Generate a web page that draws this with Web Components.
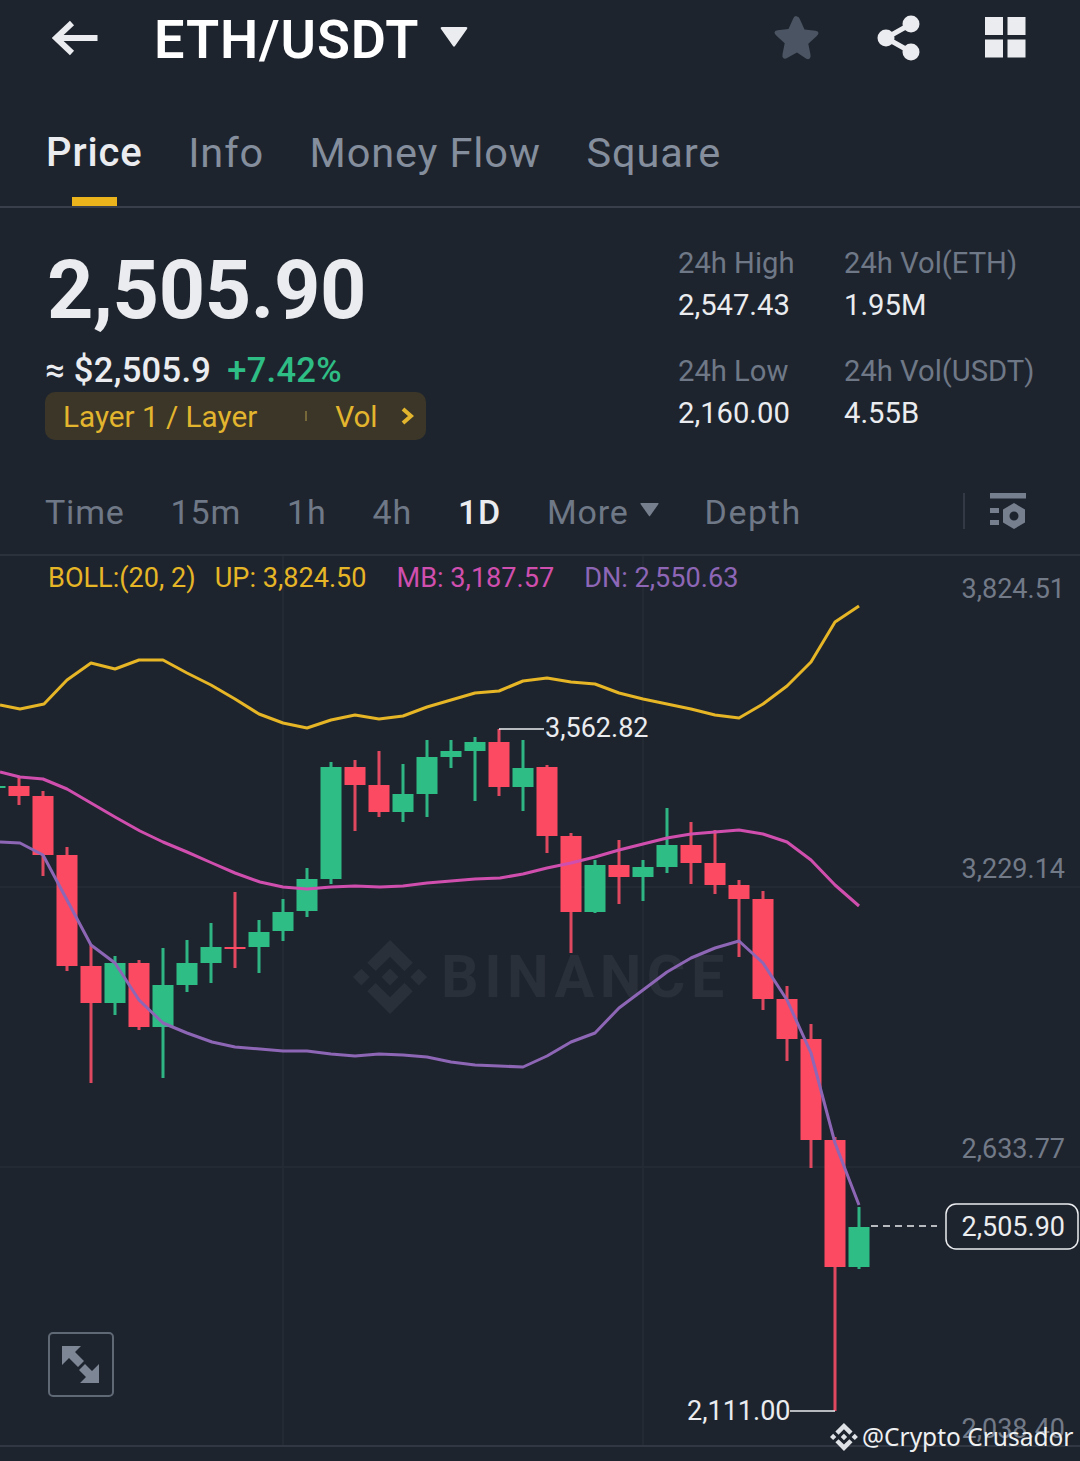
<!DOCTYPE html>
<html lang="en">
<head>
<meta charset="utf-8">
<title>ETH/USDT</title>
<style>
  html, body { margin: 0; background: #1e242e; }
  body { width: 1080px; height: 1461px; overflow: hidden; font-family: Roboto, "Liberation Sans", sans-serif; color: #eaecef; }
</style>
</head>
<body>
<pair-header pair="ETH/USDT"></pair-header>
<tab-bar>
  <tab-item active>Price</tab-item>
  <tab-item>Info</tab-item>
  <tab-item>Money Flow</tab-item>
  <tab-item>Square</tab-item>
</tab-bar>
<price-panel>
  <stat-cell label="24h High">2,547.43</stat-cell>
  <stat-cell label="24h Vol(ETH)">1.95M</stat-cell>
  <stat-cell label="24h Low">2,160.00</stat-cell>
  <stat-cell label="24h Vol(USDT)">4.55B</stat-cell>
</price-panel>
<interval-bar>
  <interval-item>Time</interval-item>
  <interval-item>15m</interval-item>
  <interval-item>1h</interval-item>
  <interval-item>4h</interval-item>
  <interval-item active>1D</interval-item>
  <interval-item caret>More</interval-item>
  <interval-item style="letter-spacing:1.600px">Depth</interval-item>
</interval-bar>
<candle-chart></candle-chart>

<script>
// Top row: back arrow, pair name, star / share / grid
class PairHeader extends HTMLElement {
  constructor() {
    super();
    this.attachShadow({ mode: 'open' });
    const pair = this.getAttribute('pair') || '';
    this.shadowRoot.innerHTML = `
      <style>
        :host { display: flex; align-items: center; height: 76px; padding: 3px 0 0 52px; box-sizing: border-box; }
        .back { margin-top: -4px; }
        .title { margin-left: 55px; font-size: 54px; line-height: 60px; font-weight: 600; color: #fff; letter-spacing: .9px; }
        .caret { margin: -6px 0 0 20px; }
        .icons { margin: -3px 0 0 auto; display: flex; align-items: center; padding-right: 54px; }
        svg { display: block; }
      </style>
      <svg class="back" width="47" height="36" viewBox="0 0 47 36"><path d="M45.500 18H5M20 3 4 18l16 15" fill="none" stroke="#eaecef" stroke-width="6"/></svg>
      <span class="title">${pair}</span>
      <svg class="caret" width="30" height="24" viewBox="0 0 30 24"><path d="M3 2h24q2 0 1 2L16 21q-1 1.500-2 0L2 4q-1-2 1-2z" fill="#eaecef"/></svg>
      <div class="icons">
        <svg width="48" height="48" viewBox="0 0 48 48"><path d="M24 2.500q2 0 3 3l4.500 10 11 1.300q3 .5 3 2.200 0 1.500-2 3.200l-8.200 7.600 2.200 11q.5 3-1 4-1.500 1-4-.5L24 38.500l-9.500 5.300q-2.500 1.500-4 .5-1.500-1-1-4l2.200-11-8.200-7.600q-2-1.700-2-3.200 0-1.700 3-2.200l11-1.300 4.500-10q1-3 3-3z" fill="#4a5462"/></svg>
        <svg style="margin-left:55px" width="46" height="48" viewBox="0 0 46 48"><g fill="#eaecef"><circle cx="10" cy="24" r="8.500"/><circle cx="35" cy="10" r="8.500"/><circle cx="35" cy="38" r="8.500"/></g><path d="M35 10 10 24l25 14" fill="none" stroke="#eaecef" stroke-width="5"/></svg>
        <svg style="margin-left:63px" width="41" height="42" viewBox="0 0 41 42"><g fill="#eaecef"><rect x="0" y="0" width="18" height="18"/><rect x="22.500" y="0" width="18" height="18"/><rect x="0" y="22.500" width="18" height="18"/><rect x="22.500" y="22.500" width="18" height="18"/></g></svg>
      </div>`;
  }
}
customElements.define('pair-header', PairHeader);

class TabBar extends HTMLElement {
  constructor() {
    super();
    this.attachShadow({ mode: 'open' });
    this.shadowRoot.innerHTML = `
      <style>
        :host { display: flex; align-items: flex-end; gap: 45.500px; height: 132px; padding-left: 46px; box-sizing: border-box; border-bottom: 2px solid #39404b; }
      </style>
      <slot></slot>`;
  }
}
customElements.define('tab-bar', TabBar);

class TabItem extends HTMLElement {
  constructor() {
    super();
    this.attachShadow({ mode: 'open' });
    this.shadowRoot.innerHTML = `
      <style>
        :host { display: flex; flex-direction: column; align-items: center; font-size: 41.500px; line-height: 48px; letter-spacing: .9px; color: #848e9c; }
        :host([active]) { color: #eaecef; font-weight: 500; font-size: 40px; }
        .bar { width: 45px; height: 9px; margin-top: 20px; }
        :host([active]) .bar { background: #ecb41c; }
      </style>
      <span><slot></slot></span>
      <div class="bar"></div>`;
  }
}
customElements.define('tab-item', TabItem);

class StatCell extends HTMLElement {
  constructor() {
    super();
    this.attachShadow({ mode: 'open' });
    const label = this.getAttribute('label') || '';
    this.shadowRoot.innerHTML = `
      <style>
        :host { display: block; font-size: 29.200px; line-height: 42px; color: #eaecef; white-space: nowrap; }
        .label { color: #6f7886; }
      </style>
      <div class="label">${label}</div>
      <div><slot></slot></div>`;
  }
}
customElements.define('stat-cell', StatCell);

// Big price, converted price, sector pill and the 24h stats on the right
class PricePanel extends HTMLElement {
  constructor() {
    super();
    this.attachShadow({ mode: 'open' });
    this.shadowRoot.innerHTML = `
      <style>
        :host { display: flex; height: 282px; padding: 34px 0 0 47px; box-sizing: border-box; }
        .left { width: 631px; flex: none; }
        .big { font-size: 81px; line-height: 92px; font-weight: 700; color: #eaecef; letter-spacing: -.4px; margin-top: 3px; }
        .sub { display: flex; gap: 16px; height: 44px; margin-top: 11px; align-items: center; font-size: 34.500px; font-weight: 500; letter-spacing: .3px; margin-left: -2px; }
        .up { color: #2ebd85; }
        .pill { display: flex; align-items: center; width: 381px; height: 48px; margin-left: -2px; box-sizing: border-box; padding-left: 18px; border-radius: 10px; background: #3b3628; color: #e3b52e; font-size: 29.700px; }
        .sep { width: 2px; height: 10px; margin-left: 48px; background: #77683a; }
        .vol { margin-left: 28px; }
        .chev { margin-left: 22px; }
        .stats { display: grid; grid-template-columns: 166px auto; row-gap: 24px; align-content: start; }
      </style>
      <div class="left">
        <div class="big">2,505.90</div>
        <div class="sub"><span>≈ $2,505.9</span><span class="up">+7.42%</span></div>
        <div class="pill">
          <span>Layer 1 / Layer</span><span class="sep"></span><span class="vol">Vol</span>
          <svg class="chev" width="14" height="18" viewBox="0 0 14 18"><path d="M3 2l8 7-8 7" fill="none" stroke="#e3b52e" stroke-width="4"/></svg>
        </div>
      </div>
      <div class="stats"><slot></slot></div>`;
  }
}
customElements.define('price-panel', PricePanel);

class IntervalBar extends HTMLElement {
  constructor() {
    super();
    this.attachShadow({ mode: 'open' });
    this.shadowRoot.innerHTML = `
      <style>
        :host { display: flex; align-items: center; gap: 46px; height: 66px; padding: 0 0 20px 45px; box-sizing: border-box; border-bottom: 2px solid #2c323c; }
        .tools { margin: -3px 0 0 auto; display: flex; align-items: center; padding-right: 54px; }
        .div { width: 2px; height: 36px; background: #333a45; margin-right: 25px; }
        svg { display: block; }
      </style>
      <slot></slot>
      <div class="tools">
        <div class="div"></div>
        <svg width="36" height="38" viewBox="0 0 36 38"><g fill="#767f8e"><rect x="0" y="1" width="36" height="5.500"/><rect x="0" y="16" width="9" height="5"/><rect x="0" y="28" width="9" height="5"/><path fill-rule="evenodd" d="M24 11l11 6.500v13L24 37l-11-6.500v-13zM24 19.500a4.500 4.500 0 1 0 0 9 4.500 4.500 0 0 0 0-9z"/></g></svg>
      </div>`;
  }
}
customElements.define('interval-bar', IntervalBar);

class IntervalItem extends HTMLElement {
  constructor() {
    super();
    this.attachShadow({ mode: 'open' });
    const caret = this.hasAttribute('caret')
      ? '<svg width="19" height="15" viewBox="0 0 19 15" style="margin:-6px 0 0 11px;display:block"><path d="M1 1h17q1 0 .5 1L10 14q-.5 .7-1 0L.5 2Q0 1 1 1z" fill="#767f8e"/></svg>'
      : '';
    this.shadowRoot.innerHTML = `
      <style>
        :host { display: flex; align-items: center; font-size: 34px; line-height: 44px; letter-spacing: .8px; color: #6f7886; }
        :host([active]) { color: #eaecef; font-weight: 500; }
      </style>
      <span><slot></slot></span>${caret}`;
  }
}
customElements.define('interval-item', IntervalItem);

// x of candle 0 is -5, each next one 24px on. [body-top, body-bottom, wick-top, wick-bottom, up?]
const CANDLES = [
  [786,788,786,788,1],[786,796,776,805,0],[796,855,791,876,0],[855,966,847,971,0],[966,1003,945,1083,0],
  [963,1003,956,1015,1],[963,1027,960,1030,0],[985,1027,948,1078,1],[963,985,940,992,1],[947,963,923,983,1],
  [947,949,892,968,0],[932,947,920,973,1],[912,931,899,941,1],[879,911,868,917,1],[767,879,762,884,1],
  [767,785,760,831,0],[785,812,751,817,0],[794,812,764,822,1],[757,794,740,817,1],[751,757,740,768,1],
  [742,751,737,801,1],[742,787,729,796,0],[768,787,740,811,1],[767,836,765,853,0],[836,912,833,953,0],
  [865,912,860,913,1],[865,877,840,904,0],[867,877,860,901,1],[845,867,808,873,1],[845,863,822,884,0],
  [863,885,830,894,0],[885,899,880,957,0],[899,999,891,1010,0],[999,1039,986,1061,0],[1039,1140,1024,1168,0],
  [1140,1267,1137,1411,0],[1227,1267,1207,1269,1]
];

const BOLL_UP = '0,705 20,709 44,704 67,680 91,663 115,669 139,660 163,660 187,673 211,685 235,699 259,714 283,723 307,728 331,720 355,715 379,719 403,716 427,707 451,700 475,693 499,691 523,681 547,678 571,682 595,684 619,693 643,699 667,704 691,709 715,715 739,718 763,704 787,686 811,662 835,622 859,606';
const BOLL_MB = '0,772 20,777 43,779 67,789 91,803 115,817 140,831 163,842 187,852 212,863 235,873 260,882 283,887 307,889 331,887 355,886 380,887 403,886 427,883 451,881 475,879 500,878 523,874 547,868 571,863 595,857 619,850 643,844 667,838 691,834 715,832 739,830 763,834 787,842 811,860 835,885 859,906';
const BOLL_DN = '0,842 20,843 43,855 67,900 91,945 115,963 139,1000 163,1023 187,1033 212,1042 235,1047 260,1049 283,1051 307,1051 331,1054 355,1056 379,1054 403,1055 427,1057 451,1062 475,1065 499,1066 523,1067 547,1056 571,1042 595,1033 619,1008 643,990 667,972 691,958 715,948 739,941 763,963 787,1000 811,1053 835,1143 859,1205';

class CandleChart extends HTMLElement {
  constructor() {
    super();
    this.attachShadow({ mode: 'open' });

    const candles = CANDLES.map((c, i) => {
      const x = -5 + i * 24;
      const col = c[4] ? '#2ebd85' : '#fb4a62';
      return `<rect x="${x - 1.5}" y="${c[2]}" width="3" height="${c[3] - c[2]}" fill="${c[4] ? '#2eb583' : '#e0485f'}"/>` +
        `<rect x="${x - 10.5}" y="${c[0]}" width="21" height="${c[1] - c[0]}" fill="${col}"/>`;
    }).join('');

    const axis = [['3,824.51', 598], ['3,229.14', 878], ['2,633.77', 1158], ['2,038.40', 1438]]
      .map(a => `<text x="1065" y="${a[1]}" text-anchor="end" class="axis">${a[0]}</text>`).join('');

    // svg uses page coordinates, the chart starts at y=556
    this.shadowRoot.innerHTML = `
      <style>
        :host { display: block; position: relative; width: 1080px; height: 905px; overflow: hidden; }
        svg { display: block; }
        text { font-family: Roboto, "Liberation Sans", sans-serif; }
        .axis { font-size: 27px; fill: #727a88; }
        .mark { font-size: 27px; fill: #eaecef; }
        .line { fill: none; stroke-width: 3; stroke-linejoin: round; }
        .legend { position: absolute; left: 48px; top: 3px; display: flex; font-size: 27.100px; line-height: 38px; white-space: nowrap; }
        .expand { position: absolute; left: 48px; top: 776px; width: 66px; height: 65px; box-sizing: border-box; border: 2px solid #5f6875; border-radius: 5px; }
        .sign { position: absolute; left: 830px; top: 866px; display: flex; align-items: center; gap: 4px; font-family: "Noto Sans", sans-serif; font-size: 24.500px; line-height: 30px; color: #eef0f2; white-space: nowrap; }
      </style>
      <svg width="1080" height="905" viewBox="0 556 1080 905">
        <g stroke="#242a33" stroke-width="2">
          <path d="M0 887H1080M0 1167H1080M283 556V1445M643 556V1445"/>
        </g>
        <path d="M0 1446H1080" stroke="#323843" stroke-width="2"/>
        <g fill="#2a303a">
          <path transform="translate(353 940) scale(.585)" d="M38.730 53.200l24.590-24.580 24.600 24.600 14.300-14.310L63.320 0 24.420 38.900zM0 63.310l14.300-14.310 14.310 14.310-14.310 14.300zM38.730 73.410l24.590 24.590 24.600-24.600 14.310 14.290-38.900 38.910-38.910-38.880zM98 63.310l14.300-14.310 14.310 14.300-14.310 14.320zM77.830 63.300L63.320 48.780 52.590 59.510l-1.240 1.230-2.540 2.540 14.510 14.500 14.510-14.470z"/>
          <text x="441" y="997" font-size="59" font-weight="700" letter-spacing="5.500">BINANCE</text>
        </g>
        ${axis}
        ${candles}
        <polyline class="line" stroke="#e6b626" points="${BOLL_UP}"/>
        <polyline class="line" stroke="#d04fae" points="${BOLL_MB}"/>
        <polyline class="line" stroke="#8d66b6" points="${BOLL_DN}"/>
        <path d="M499 729H544M790 1411H835" stroke="#eaecef" stroke-width="1.500"/>
        <text x="545" y="737" class="mark">3,562.82</text>
        <text x="687" y="1420" class="mark">2,111.00</text>
        <path d="M871 1226H937" stroke="#eaecef" stroke-width="1.500" stroke-dasharray="7 5"/>
        <rect x="946" y="1204" width="132" height="45" rx="10" fill="#1e242e" stroke="#eaecef" stroke-width="1.500"/>
        <text x="1065" y="1236" text-anchor="end" class="mark">2,505.90</text>
      </svg>
      <div class="legend">
        <span style="color:#e6b626">BOLL:(20, 2)</span>
        <span style="color:#e6b626;margin-left:19px">UP: 3,824.50</span>
        <span style="color:#d04fae;margin-left:30px">MB: 3,187.57</span>
        <span style="color:#8d66b6;margin-left:30px">DN: 2,550.63</span>
      </div>
      <div class="expand">
        <svg width="62" height="61" viewBox="0 0 62 61" style="display:block">
          <g fill="#7d8695">
            <path d="M12 12h19l-6 6 9 9-6 6-9-9-7 7z"/>
            <path d="M49 49H30l6-6-7-7 6-6 7 7 7-7z"/>
          </g>
        </svg>
      </div>
      <div class="sign">
        <svg width="28" height="28" viewBox="0 0 127 127" style="display:block"><path fill="#dfe2e6" d="M38.730 53.200l24.590-24.580 24.600 24.600 14.300-14.310L63.320 0 24.420 38.900zM0 63.310l14.300-14.310 14.310 14.310-14.310 14.300zM38.730 73.410l24.590 24.590 24.600-24.600 14.310 14.290-38.900 38.910-38.910-38.880zM98 63.310l14.300-14.310 14.310 14.300-14.310 14.320zM77.830 63.300L63.320 48.780 52.590 59.510l-1.240 1.230-2.540 2.540 14.510 14.500 14.510-14.470z"/></svg>
        <span>@Crypto Crusador</span>
      </div>`;
  }
}
customElements.define('candle-chart', CandleChart);
</script>
</body>
</html>
